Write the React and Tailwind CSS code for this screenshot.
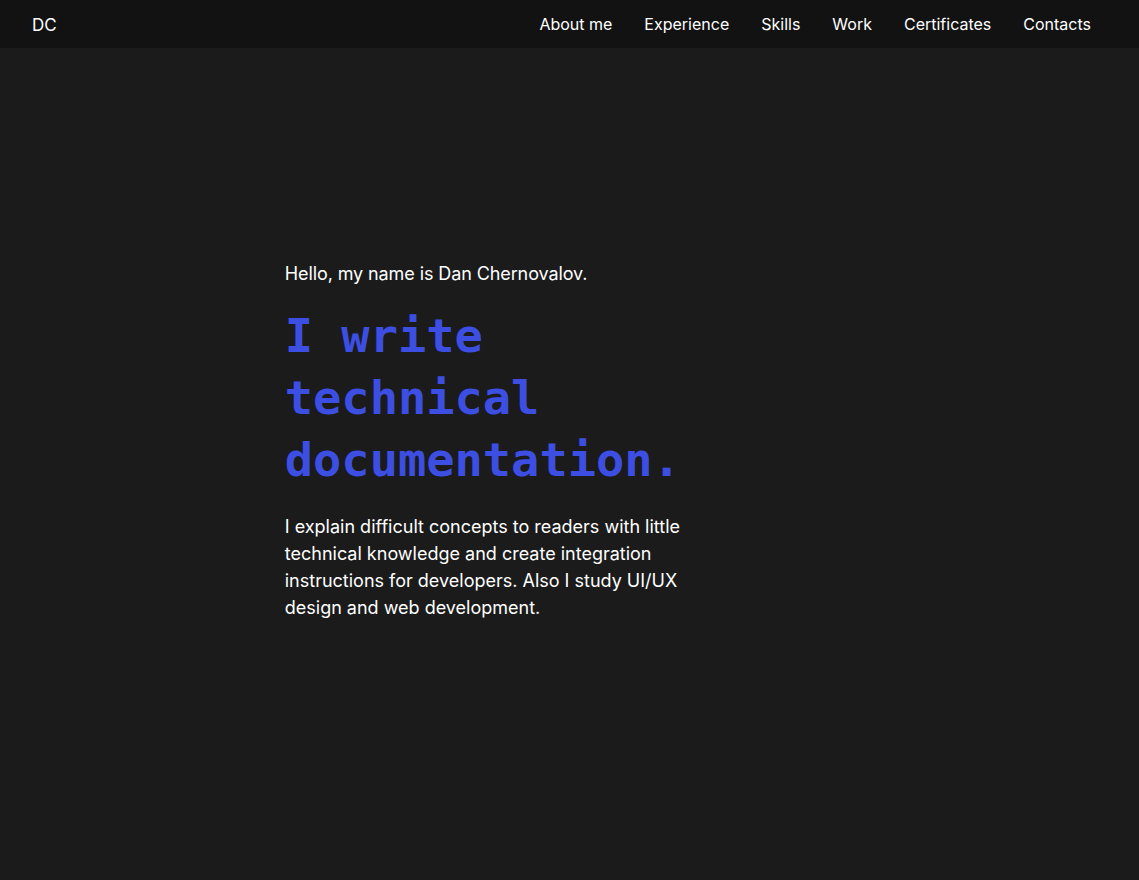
import React from "react";

const links = ["About me", "Experience", "Skills", "Work", "Certificates", "Contacts"];

export default function App() {
  return (
    <div className="min-h-screen bg-[#1b1b1b] text-white font-['Inter',sans-serif]">
      {/* Nav */}
      <nav className="h-12 bg-[#121212] flex items-center justify-between pl-8 pr-12">
        <span className="text-[17px] mt-1">DC</span>
        <ul className="flex gap-8 text-[16px]">
          {links.map((l) => (
            <li key={l}>{l}</li>
          ))}
        </ul>
      </nav>

      {/* Hero */}
      <main className="w-1/2 mx-auto pt-[212px]">
        <div className="w-[440px]">
          <p className="text-[18px] leading-[27px] tracking-[-0.1px]">Hello, my name is Dan Chernovalov.</p>
          <h1 className="mt-[18px] text-[47px] leading-[62px] font-bold text-[#3c4fe2] font-['DejaVu_Sans_Mono',monospace]">
            I write technical documentation.
          </h1>
          <p className="mt-[22px] text-[18px] leading-[27px]">
            I explain difficult concepts to readers with little technical knowledge and create
            integration instructions for developers. Also I study UI/UX design and web development.
          </p>
        </div>
      </main>
    </div>
  );
}
